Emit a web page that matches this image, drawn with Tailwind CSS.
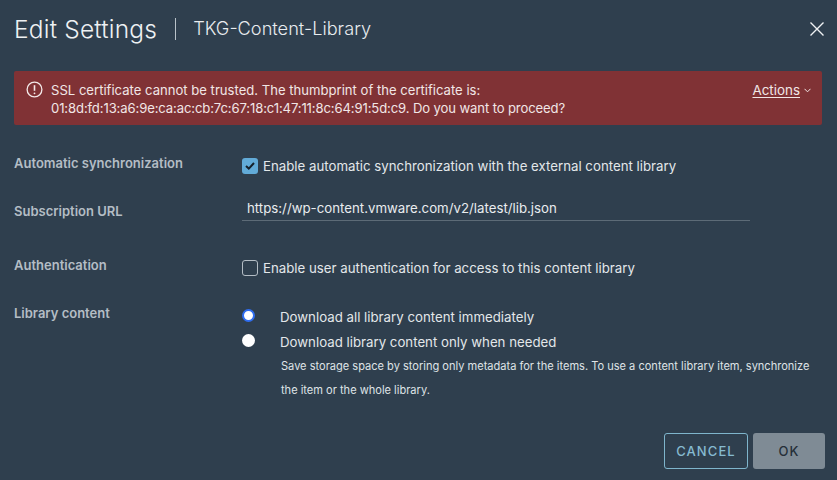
<!DOCTYPE html>
<html lang="en">
<head>
  <meta charset="UTF-8">
  <meta name="viewport" content="width=device-width, initial-scale=1.0">
  <title>Edit Settings</title>
  <script src="https://cdn.jsdelivr.net/npm/@tailwindcss/browser@4"></script>
</head>
<body class="bg-[#2f3f4e] w-[837px] h-[480px] overflow-hidden font-['Inter',sans-serif] text-[#e9ecef]">

  <!-- Header -->
  <div class="flex items-center h-[58px] pl-[14px] pr-[12px]">
    <h1 class="text-[24.5px] font-light text-[#eef1f3] tracking-[0.2px]">Edit Settings</h1>
    <div class="w-px h-[22px] bg-[#b9c2c9] ml-[18px] mr-[17px]"></div>
    <div class="text-[18.2px] font-light text-[#e9ecef]">TKG-Content-Library</div>
    <svg class="ml-auto" width="16" height="16" viewBox="0 0 16 16" fill="none" stroke="#f0f2f4" stroke-width="1.4"><path d="M1.5 1.5 14.5 14.5M14.5 1.5 1.5 14.5"/></svg>
  </div>

  <!-- Alert banner -->
  <div class="flex mt-[13px] mx-[14px] w-[808px] h-[54px] bg-[#803235] rounded-[2px] pl-[12px] pr-[11px] pt-[10px]">
    <svg class="shrink-0" width="17" height="17" viewBox="0 0 17 17" fill="none" stroke="#f3e9e9" stroke-width="1.3"><circle cx="8.5" cy="8.5" r="7.4"/><path d="M8.5 4.2v5.6" stroke-width="1.6"/><circle cx="8.5" cy="12.3" r=".9" fill="#f3e9e9" stroke="none"/></svg>
    <div class="ml-[8px] text-[13.1px] leading-[18px] text-[#f1e6e6]">
      <div>SSL certificate cannot be trusted. The thumbprint of the certificate is:</div>
      <div class="tracking-[-0.12px]">01:8d:fd:13:a6:9e:ca:ac:cb:7c:67:18:c1:47:11:8c:64:91:5d:c9. Do you want to proceed?</div>
    </div>
    <div class="ml-auto flex items-start text-[13.4px] leading-[18px] text-[#f1e6e6]">
      <span class="underline underline-offset-2">Actions</span>
      <svg class="ml-[4px] mt-[7px]" width="7" height="5" viewBox="0 0 7 5" fill="none" stroke="#f1e6e6" stroke-width="1"><path d="M.5 .8 3.5 3.8 6.5 .8"/></svg>
    </div>
  </div>

  <!-- Form -->
  <div class="grid grid-cols-[228px_1fr] mx-[14px] mt-[27px] text-[13.25px]">
    <div class="h-[46px] font-semibold text-[#b4bdc5] text-[13px] leading-[23px]">Automatic synchronization</div>
    <div class="h-[46px] flex items-start pt-[6px]">
      <span class="w-4 h-4 rounded-[3px] bg-[#62abd8] flex items-center justify-center">
        <svg width="10" height="8" viewBox="0 0 10 8" fill="none" stroke="#16212b" stroke-width="2"><path d="M1 4 3.8 6.6 9 1"/></svg>
      </span>
      <span class="ml-[5px] leading-[16px] text-[#e3e7ea]">Enable automatic synchronization with the external content library</span>
    </div>

    <div class="h-[58px] font-semibold text-[#b4bdc5] text-[13px] leading-[26px]">Subscription URL</div>
    <div class="h-[58px]">
      <div class="w-[508px] h-[23px] border-b border-[#5d6b77] pl-[5px] pt-[1px] leading-[18px] text-[#e9ecef]">https://wp-content.vmware.com/v2/latest/lib.json</div>
    </div>

    <div class="h-[48px] font-semibold text-[#b4bdc5] text-[13px] leading-[18px]">Authentication</div>
    <div class="h-[48px] flex items-start pt-[4px]">
      <span class="w-4 h-4 rounded-[3px] border border-[#b4bdc5]"></span>
      <span class="ml-[5px] leading-[16px] text-[#e3e7ea]">Enable user authentication for access to this content library</span>
    </div>

    <div class="font-semibold text-[#b4bdc5] text-[13px] leading-[18px]">Library content</div>
    <div class="text-[#e3e7ea]">
      <div class="flex items-center h-[25px]">
        <span class="w-[13px] h-[13px] rounded-full bg-white border-2 border-[#2f6df0] mb-[2px]"></span>
        <span class="ml-[25px] mt-[2px]">Download all library content immediately</span>
      </div>
      <div class="flex items-center h-[25px]">
        <span class="w-[13px] h-[13px] rounded-full bg-white mb-[2px]"></span>
        <span class="ml-[25px] mt-[2px]">Download library content only when needed</span>
      </div>
      <div class="ml-[39px] text-[11.05px] leading-[24px] text-[#dfe3e6] w-[540px]">Save storage space by storing only metadata for the items. To use a content library item, synchronize the item or the whole library.</div>
    </div>
  </div>

  <!-- Footer buttons -->
  <div class="flex justify-end gap-[5px] pr-[12px] mt-[31px]">
    <button class="w-[84px] h-[36px] pt-[1px] border border-[#7fb5cc] rounded-[3px] text-[#86bad0] text-[13px] font-medium tracking-[1.1px]">CANCEL</button>
    <button class="w-[72px] h-[36px] pt-[1px] bg-[#7f8b95] rounded-[3px] text-[#252f38] text-[13px] font-medium tracking-[1.1px]">OK</button>
  </div>

</body>
</html>
